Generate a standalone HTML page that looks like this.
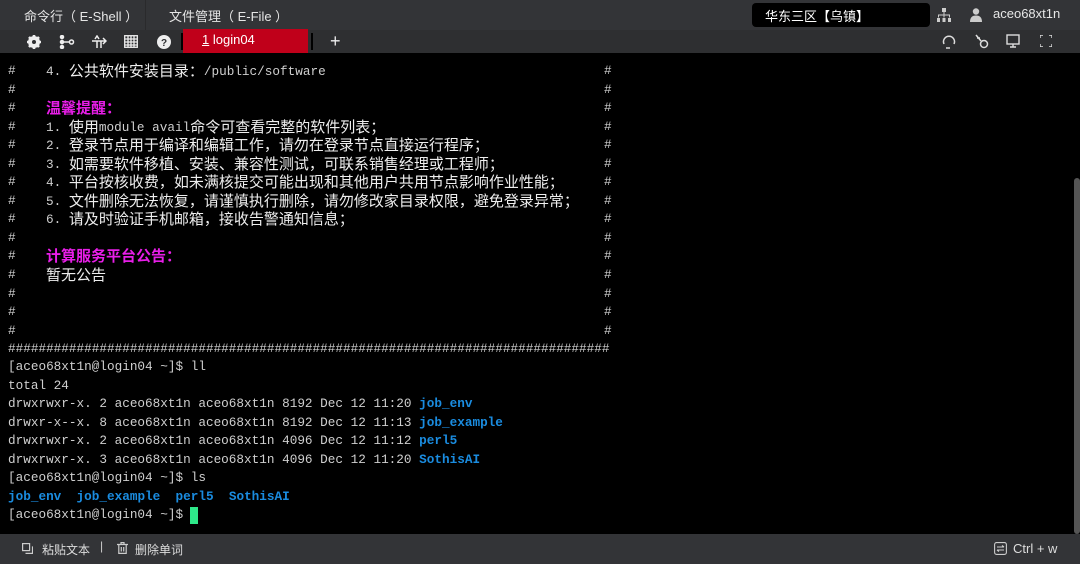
<!DOCTYPE html>
<html><head><meta charset="utf-8"><style>
*{margin:0;padding:0;box-sizing:border-box}
body{width:1080px;height:564px;background:#000;position:relative;overflow:hidden;font-family:"Liberation Sans","Noto Sans CJK SC",sans-serif}
.top{position:absolute;left:0;top:0;width:1080px;height:30px;background:#333437;color:#e6e6e6;font-size:13px}
.bar2{position:absolute;left:0;top:30px;width:1080px;height:23px;background:#2e2f31}
.bot{position:absolute;left:0;top:534px;width:1080px;height:30px;background:#333437;color:#ddd;font-size:12px}
.t{position:absolute;font-family:"Liberation Mono","Noto Sans CJK SC",monospace;font-size:12.7px;line-height:18.55px;height:18.55px;color:#cfcfcf;white-space:pre}
.m{left:46px}
.c{font-family:"Noto Sans CJK SC",sans-serif;font-size:15px;color:#eee;line-height:1;position:relative;top:1px}
.p{font-family:"Noto Sans CJK SC",sans-serif;font-size:15px;color:#e81ee8;font-weight:bold;line-height:1;position:relative;top:1px}
.b{color:#1a8ce0;font-weight:bold}
.ic{position:absolute;top:5px}
</style></head><body>
<div class="top">
 <div style="position:absolute;left:24px;top:6px">命令行（ E-Shell ）</div>
 <div style="position:absolute;left:145px;top:0;width:1px;height:30px;background:#2a2a2c"></div>
 <div style="position:absolute;left:169px;top:6px">文件管理（ E-File ）</div>
 <div style="position:absolute;left:752px;top:3px;width:178px;height:24px;background:#000;border-radius:4px;color:#fff;font-size:13px;padding:3px 0 0 13px">华东三区【乌镇】</div>
 <svg style="position:absolute;left:937px;top:8px" width="14" height="14" viewBox="0 0 14 14" fill="#ccc"><rect x="5" y="0" width="4" height="4"/><rect x="6.5" y="4" width="1" height="3"/><rect x="1" y="6.5" width="12" height="1"/><rect x="1" y="6.5" width="1" height="3"/><rect x="12" y="6.5" width="1" height="3"/><rect x="6.5" y="6.5" width="1" height="3"/><rect x="0" y="10" width="3" height="4"/><rect x="5.5" y="10" width="3" height="4"/><rect x="11" y="10" width="3" height="4"/></svg>
 <svg style="position:absolute;left:970px;top:8px" width="12" height="14" viewBox="0 0 12 14" fill="#ccc"><circle cx="6" cy="3.5" r="3.2"/><path d="M0 14 Q0 7.5 6 7.5 Q12 7.5 12 14Z"/></svg>
 <div style="position:absolute;left:993px;top:6px">aceo68xt1n</div>
</div>
<div class="bar2">
 <svg class="ic" style="left:27px" width="14" height="14" viewBox="0 0 14 14"><circle cx="7" cy="7" r="4.5" fill="none" stroke="#eee" stroke-width="3"/><g stroke="#eee" stroke-width="2.6"><path d="M7 0v14M0 7h14M2 2l10 10M12 2L2 12"/></g><circle cx="7" cy="7" r="2" fill="#2e2f31"/></svg>
 <svg class="ic" style="left:59px" width="16" height="14" viewBox="0 0 16 14" fill="none" stroke="#eee" stroke-width="1.5"><circle cx="3" cy="2" r="1.5" fill="#eee"/><circle cx="3" cy="12" r="1.5" fill="#eee"/><circle cx="3" cy="7" r="1.5" fill="#eee"/><path d="M3 7h7"/><circle cx="12.5" cy="7" r="2"/></svg>
 <svg class="ic" style="left:91px" width="16" height="14" viewBox="0 0 16 14" fill="none" stroke="#eee" stroke-width="1.5"><path d="M1 6h14M12 3l3 3-3 3M6 6v7M10 6v7M4 4l2-3 2 3"/></svg>
 <svg class="ic" style="left:124px" width="14" height="13" viewBox="0 0 14 13" fill="none" stroke="#eee" stroke-width="1.3"><rect x="0.7" y="0.7" width="12.6" height="11.6"/><path d="M0.7 4h12.6M0.7 7h12.6M0.7 10h12.6M4 0.7v11.6M7 0.7v11.6M10 0.7v11.6"/></svg>
 <svg class="ic" style="left:157px" width="14" height="14" viewBox="0 0 14 14"><circle cx="7" cy="7" r="7" fill="#eee"/><text x="7" y="11" font-size="10" font-weight="bold" text-anchor="middle" fill="#2e2f31" font-family="Liberation Sans">?</text></svg>
 <div style="position:absolute;left:181px;top:3px;width:2px;height:17px;background:#000"></div>
 <div style="position:absolute;left:183px;top:-1px;width:125px;height:24px;background:#c0001a;color:#fff;font-size:13px;padding:3px 0 0 19px"><u>1</u> login04</div>
 <div style="position:absolute;left:311px;top:3px;width:2px;height:17px;background:#000"></div>
 <div style="position:absolute;left:330px;top:0;color:#eee;font-size:18px;line-height:22px">+</div>
 <svg style="position:absolute;left:942px;top:5px" width="14" height="14" viewBox="0 0 14 14" fill="none" stroke="#ddd" stroke-width="1.5"><path d="M2 9A5.5 5.5 0 1 1 12 9"/><path d="M4 13h4"/></svg>
 <svg style="position:absolute;left:975px;top:4px" width="14" height="15" viewBox="0 0 14 15" fill="none" stroke="#ddd" stroke-width="1.5"><path d="M1 1l5 6M2 4h3"/><circle cx="9" cy="10" r="3.5"/></svg>
 <svg style="position:absolute;left:1006px;top:4px" width="14" height="14" viewBox="0 0 14 14" fill="none" stroke="#ddd" stroke-width="1.4"><rect x="1" y="1" width="12" height="9"/><path d="M7 10v3M4 13h6"/></svg>
 <svg style="position:absolute;left:1040px;top:5px" width="12" height="12" viewBox="0 0 12 12" fill="none" stroke="#ddd" stroke-width="1.4"><path d="M0 3V0h3M9 0h3v3M12 9v3H9M3 12H0V9"/></svg>
</div>

<div class="t" style="left:8px;top:62px;height:auto">#
#
#
#
#
#
#
#
#
#
#
#
#
#
#</div>
<div class="t" style="left:604px;top:62px;height:auto">#
#
#
#
#
#
#
#
#
#
#
#
#
#
#</div>
<div class="t m" style="top:62px">4. <span class="c">公共软件安装目录：</span>/public/software</div>
<div class="t m" style="top:99.1px"><span class="p">温馨提醒：</span></div>
<div class="t m" style="top:117.6px">1. <span class="c">使用</span>module avail<span class="c">命令可查看完整的软件列表；</span></div>
<div class="t m" style="top:136.2px">2. <span class="c">登录节点用于编译和编辑工作，请勿在登录节点直接运行程序；</span></div>
<div class="t m" style="top:154.7px">3. <span class="c">如需要软件移植、安装、兼容性测试，可联系销售经理或工程师；</span></div>
<div class="t m" style="top:173.2px">4. <span class="c">平台按核收费，如未满核提交可能出现和其他用户共用节点影响作业性能；</span></div>
<div class="t m" style="top:191.8px">5. <span class="c">文件删除无法恢复，请谨慎执行删除，请勿修改家目录权限，避免登录异常；</span></div>
<div class="t m" style="top:210.3px">6. <span class="c">请及时验证手机邮箱，接收告警通知信息；</span></div>
<div class="t m" style="top:247.4px"><span class="p">计算服务平台公告：</span></div>
<div class="t m" style="top:265.9px"><span class="c">暂无公告</span></div>
<div class="t" style="left:8px;top:339.5px">###############################################################################</div>
<div class="t" style="left:8px;top:358px;height:auto">[aceo68xt1n@login04 ~]$ ll
total 24
drwxrwxr-x. 2 aceo68xt1n aceo68xt1n 8192 Dec 12 11:20 <span class="b">job_env</span>
drwxr-x--x. 8 aceo68xt1n aceo68xt1n 8192 Dec 12 11:13 <span class="b">job_example</span>
drwxrwxr-x. 2 aceo68xt1n aceo68xt1n 4096 Dec 12 11:12 <span class="b">perl5</span>
drwxrwxr-x. 3 aceo68xt1n aceo68xt1n 4096 Dec 12 11:20 <span class="b">SothisAI</span>
[aceo68xt1n@login04 ~]$ ls
<span class="b">job_env</span>  <span class="b">job_example</span>  <span class="b">perl5</span>  <span class="b">SothisAI</span>
[aceo68xt1n@login04 ~]$ </div>
<div style="position:absolute;left:190px;top:507px;width:8px;height:17px;background:#2ee88a"></div>
<div style="position:absolute;left:1074px;top:178px;width:6px;height:356px;background:#555;border-radius:3px"></div>

<div class="bot">
 <svg style="position:absolute;left:22px;top:9px" width="11" height="11" viewBox="0 0 11 11" fill="none" stroke="#ccc" stroke-width="1.2"><rect x="0.6" y="0.6" width="7" height="7"/><path d="M3.5 10.4h7v-7"/></svg>
 <div style="position:absolute;left:42px;top:7px">粘贴文本</div>
 <div style="position:absolute;left:100px;top:5px;color:#ccc">|</div>
 <svg style="position:absolute;left:117px;top:8px" width="11" height="12" viewBox="0 0 11 12" fill="none" stroke="#ccc" stroke-width="1.2"><path d="M0 2.5h11M4 2.5V.6h3v1.9M1.8 2.5v8.9h7.4V2.5M4.3 5v4.5M6.7 5v4.5"/></svg>
 <div style="position:absolute;left:135px;top:7px">删除单词</div>
 <svg style="position:absolute;left:994px;top:8px" width="13" height="13" viewBox="0 0 13 13" fill="none" stroke="#ccc" stroke-width="1.1"><rect x="0.6" y="0.6" width="11.8" height="11.8" rx="2"/><path d="M3 5h7M8 3.5l2 1.5M3 8h7M5 9.5L3 8"/></svg>
 <div style="position:absolute;left:1013px;top:7px;font-size:13px">Ctrl + w</div>
</div>
</body></html>
